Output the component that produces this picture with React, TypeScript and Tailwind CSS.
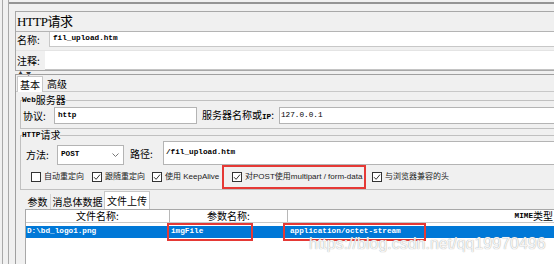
import React from 'react'

const cjk = "font-['Noto_Sans_CJK_SC',sans-serif]"
const mono = "font-['Liberation_Mono','Noto_Sans_CJK_SC',monospace]"
const sans = "font-['Liberation_Sans','Noto_Sans_CJK_SC',sans-serif]"

function Check({ checked }: { checked?: boolean }) {
  return (
    <span className="w-[10px] h-[10px] border border-[#333] bg-white flex items-center justify-center shrink-0">
      {checked && (
        <svg width="8" height="8" viewBox="0 0 8 8">
          <path d="M1 4.2 L3.1 6.3 L7 1.6" fill="none" stroke="#333" strokeWidth="1" />
        </svg>
      )}
    </span>
  )
}

function CheckItem({ label, checked, w }: { label: string; checked?: boolean; w: string }) {
  return (
    <div className={`flex items-center gap-[3px] shrink-0 ${w}`}>
      <Check checked={checked} />
      <span className={`${sans} text-[8px] leading-[10px] text-[#222] whitespace-nowrap`}>{label}</span>
    </div>
  )
}

export default function App() {
  return (
    <div className={`w-[554px] h-[264px] overflow-hidden bg-[#f0f0f0] flex text-black ${cjk}`}>
      {/* tree edge on the left */}
      <div className="w-[9px] shrink-0 flex justify-between">
        <div className="w-px ml-[2px] bg-[#a8a8a8]" />
        <div className="w-px bg-[#a8a8a8]" />
      </div>

      <div className="flex-1 min-w-0 flex flex-col">
        <div className="mt-[2px] h-[2px] bg-[#949494]" />

        {/* HTTP请求 header panel */}
        <div className="ml-[6px] mt-[7px] border-t border-l border-b border-[#a8a8a8] flex flex-col">
          <div className="h-[20px] border-b border-[#b4b4b4] flex items-center pl-[1px]">
            <span className="text-[13px] leading-[16px] font-['Liberation_Serif','Noto_Sans_CJK_SC',serif] tracking-[-0.5px]">HTTP请求</span>
          </div>
          <div className="h-[15px] flex items-center">
            <span className="w-[33px] text-[10px] leading-[12px] pl-[1px]">名称:</span>
            <div className="flex-1 h-[15px] bg-white border-l border-b border-[#c8c8c8] flex items-center pl-[3px]">
              <span className={`${mono} text-[7.7px] font-bold`}>fil_upload.htm</span>
            </div>
          </div>
          <div className="h-[4px] border-b border-[#e4e4e4]" />
          <div className="h-[19px] flex items-center">
            <span className="w-[29px] text-[10px] leading-[12px] pl-[1px]">注释:</span>
            <div className="flex-1 h-[19px] bg-white border-b border-[#c4c4c4]" />
          </div>
        </div>

        {/* splitter arrows */}
        <div className="h-[3px] ml-[9px] flex items-center gap-[3px] text-[5px] leading-[3px] text-[#333]">
          <span>▲</span>
          <span>▼</span>
        </div>

        {/* 基本 / 高级 tab panel */}
        <div className="ml-[6px] border-t border-l border-[#a0a0a0] flex flex-col flex-1">
          <div className="h-[17px] flex items-end border-b border-[#c8c8c8] pl-[1px]">
            <div className="h-[16px] w-[26px] bg-white border border-b-0 border-[#c8c8c8] -mb-px flex items-center justify-center text-[10px] leading-[12px]">
              基本
            </div>
            <div className="h-[14px] ml-[2px] px-[2px] flex items-center text-[10px] leading-[12px]">高级</div>
          </div>

          {/* Web服务器 */}
          <fieldset className="ml-[4px] mt-[2px] border border-r-0 border-[#c0c0c0] pb-[4px]">
            <legend className="ml-[1px] text-[10px] leading-[12px] flex">
              <span className={`${mono} text-[7.7px] font-bold self-center`}>Web</span>服务器
            </legend>
            <div className="flex items-center h-[17px] mt-[1px] pl-[2px]">
              <span className="w-[31px] text-[10px] leading-[12px]">协议:</span>
              <div className="w-[143px] h-[17px] bg-white border border-[#b4b4b4] flex items-center pl-[3px]">
                <span className={`${mono} text-[7.7px] font-bold`}>http</span>
              </div>
              <span className="ml-[5px] w-[77px] text-[10px] leading-[12px] whitespace-nowrap">
                服务器名称或<span className={`${mono} text-[7.7px] font-bold`}>IP</span>:
              </span>
              <div className="flex-1 h-[17px] bg-white border-t border-l border-b border-[#b4b4b4] flex items-center pl-[1px]">
                <span className={`${mono} text-[7.7px]`}>127.0.0.1</span>
              </div>
            </div>
          </fieldset>

          {/* HTTP请求 */}
          <fieldset className="ml-[4px] border border-r-0 border-[#c0c0c0]">
            <legend className="ml-[1px] text-[10px] leading-[12px] flex">
              <span className={`${mono} text-[7.7px] font-bold self-center`}>HTTP</span>请求
            </legend>
            <div className="flex items-end h-[24px] pl-[5px]">
              <span className="w-[31px] h-[20px] flex items-center text-[10px] leading-[12px]">方法:</span>
              <div className="w-[67px] h-[20px] bg-white border border-[#b4b4b4] flex items-center pl-[3px] pr-[4px] justify-between">
                <span className={`${mono} text-[7.7px] font-bold`}>POST</span>
                <svg width="7" height="4" viewBox="0 0 7 4">
                  <path d="M0.5 0.5 L3.5 3.5 L6.5 0.5" fill="none" stroke="#777" strokeWidth="1" />
                </svg>
              </div>
              <span className="ml-[6px] w-[33px] h-[22px] flex items-center text-[10px] leading-[12px]">路径:</span>
              <div className="flex-1 h-[24px] bg-white border-t border-l border-b border-[#b4b4b4] flex items-center pl-[2px] pb-[1px]">
                <span className={`${mono} text-[7.7px] font-bold`}>/fil_upload.htm</span>
              </div>
            </div>
            <div className="flex items-center h-[24px] pl-[10px]">
              <CheckItem label="自动重定向" w="w-[61px]" />
              <CheckItem label="跟随重定向" checked w="w-[60px]" />
              <CheckItem label="使用 KeepAlive" checked w="w-[70px]" />
              <div className="w-[144px] h-[24px] border-2 border-[#e53935] flex items-center pl-[8px] shrink-0">
                <CheckItem label="对POST使用multipart / form-data" checked w="w-auto" />
              </div>
              <div className="ml-[6px]">
                <CheckItem label="与浏览器兼容的头" checked w="w-auto" />
              </div>
            </div>
          </fieldset>

          {/* 参数 / 消息体数据 / 文件上传 */}
          <div className="ml-[9px] flex flex-col flex-1">
            <div className="h-[19px] flex items-end text-[10px] leading-[12px]">
              <div className="h-[15px] w-[26px] flex items-center justify-center border-r border-[#d4d4d4]">参数</div>
              <div className="h-[15px] w-[53px] flex items-center justify-center">消息体数据</div>
              <div className="h-[18px] w-[46px] bg-white border border-b-0 border-[#c8c8c8] flex items-center justify-center">
                文件上传
              </div>
            </div>

            <div className="flex-1 bg-white border-t border-l border-[#a8a8a8] flex flex-col relative">
              <div className="h-[13px] flex text-[10px] leading-[12px] border-b border-[#c8c8c8]">
                <div className="w-[144px] border-r border-[#b8b8b8] flex items-center justify-center">文件名称:</div>
                <div className="w-[118px] border-r border-[#b8b8b8] flex items-center justify-center">参数名称:</div>
                <div className="flex-1 flex items-center justify-end pr-[1px]">
                  <span className={`${mono} text-[7.7px] font-bold`}>MIME</span>类型
                </div>
              </div>
              <div className={`mt-[3px] h-[12px] bg-[#0078d7] flex text-white ${mono} text-[7.7px] font-bold`}>
                <div className="w-[144px] flex items-center pl-[1px]">D:\bd_logo1.png</div>
                <div className="w-[118px] flex items-center pl-[1px] relative">
                  imgFile
                  <div className="absolute left-[-3px] top-[-3px] w-[86px] h-[18px] border-2 border-[#e53935]" />
                </div>
                <div className="flex-1 flex items-center pl-[2px] relative">
                  application/octet-stream
                  <div className="absolute left-[-5px] top-[-3px] w-[143px] h-[18px] border-2 border-[#e53935]" />
                </div>
              </div>

              <div
                className={`absolute left-[283px] top-[24px] ${sans} text-[16px] leading-[20px] text-white/90 whitespace-nowrap [text-shadow:0_0_1px_#8a8a8a]`}
              >
                https://blog.csdn.net/qq19970496
              </div>
            </div>
          </div>
        </div>
      </div>
    </div>
  )
}
